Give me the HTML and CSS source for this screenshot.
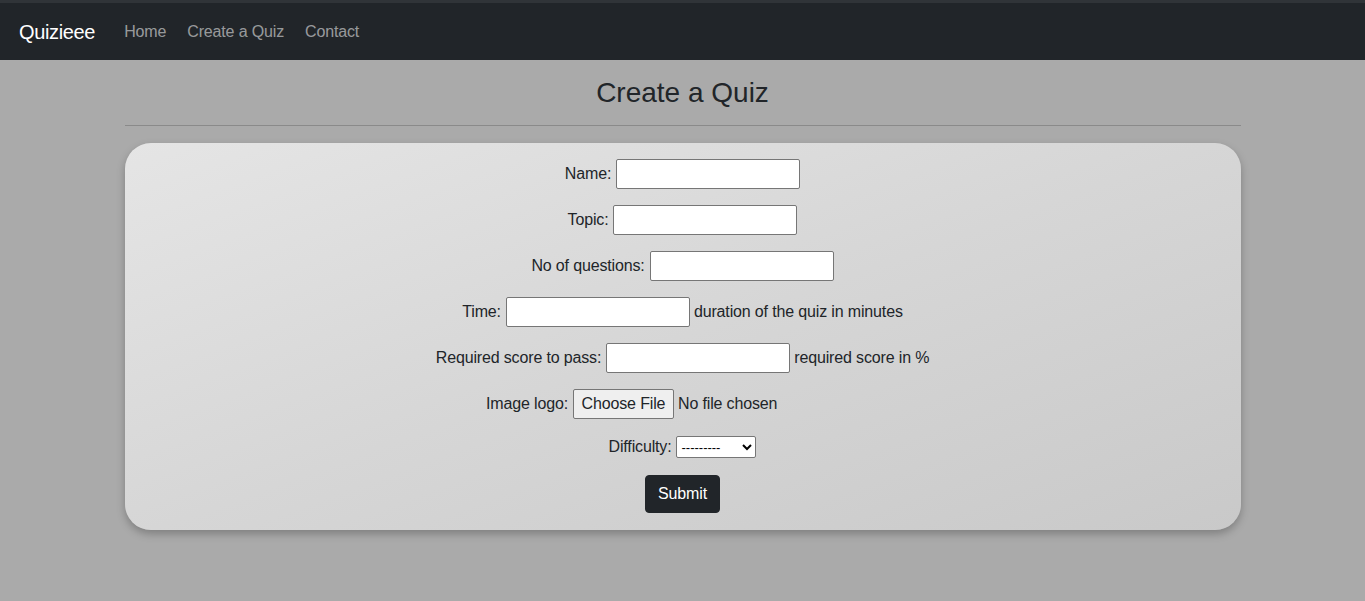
FILE: index.html
```html
<!DOCTYPE html>
<html lang="en">
<head>
<meta charset="utf-8">
<title>Create a Quiz</title>
<link rel="stylesheet" href="styles.css">
</head>
<body>
<nav class="navbar">
  <a class="brand" href="#">Quizieee</a>
  <ul class="nav-links">
    <li><a href="#">Home</a></li>
    <li><a href="#">Create a Quiz</a></li>
    <li><a href="#">Contact</a></li>
  </ul>
</nav>
<main class="container">
  <h3 class="title">Create a Quiz</h3>
  <hr class="divider">
  <form class="quiz-card">
    <p class="row"><label>Name:</label> <input class="field" type="text"></p>
    <p class="row"><label>Topic:</label> <input class="field" type="text"></p>
    <p class="row"><label>No of questions:</label> <input class="field" type="text"></p>
    <p class="row"><label>Time:</label> <input class="field" type="text"> <span>duration of the quiz in minutes</span></p>
    <p class="row"><label>Required score to pass:</label> <input class="field" type="text"> <span>required score in %</span></p>
    <p class="row"><label>Image logo:</label> <span class="file-input"><span class="file-btn">Choose File</span><span>No file chosen</span></span></p>
    <p class="row"><label>Difficulty:</label> <select class="select"><option>---------</option></select></p>
    <p class="row"><button type="button" class="submit">Submit</button></p>
  </form>
</main>
</body>
</html>
```
FILE: styles.css
```css
* { box-sizing: border-box; }
html, body {
  margin: 0;
  padding: 0;
}
body {
  background: #aaaaaa;
  font-family: "Liberation Sans", Arial, sans-serif;
  font-size: 16px;
  color: #212529;
  height: 601px;
  overflow: hidden;
}
.navbar {
  display: flex;
  align-items: center;
  height: 60px;
  background: #212529;
  border-top: 3px solid #303438;
  padding: 1px 19px 0;
}
.brand {
  color: #fff;
  text-decoration: none;
  font-size: 20px;
  letter-spacing: -0.35px;
  margin-right: 29px;
  line-height: 30px;
}
.nav-links {
  display: flex;
  list-style: none;
  margin: 0;
  padding: 0;
  gap: 21px;
}
.nav-links a {
  color: rgba(255,255,255,0.55);
  text-decoration: none;
  font-size: 16px;
  letter-spacing: -0.15px;
  line-height: 24px;
}
.container {
  width: 1116px;
  margin: 0 auto;
  padding-top: 15px;
}
.title {
  margin: 0;
  text-align: center;
  font-weight: 400;
  font-size: 28px;
  line-height: 36px;
  color: #212529;
}
.divider {
  margin: 14px 0 17px;
  border: 0;
  border-top: 1px solid #8a8a8a;
  height: 0;
}
.quiz-card {
  display: flex;
  flex-direction: column;
  align-items: center;
  gap: 16px;
  padding: 16px 0 17px;
  border-radius: 26px;
  background: linear-gradient(160deg, #e5e5e5 0%, #d6d6d6 50%, #c9c9c9 100%);
  box-shadow: 0 4px 8px rgba(0,0,0,0.25);
}
.row {
  margin: 0;
  display: flex;
  align-items: center;
  gap: 4px;
  font-size: 16px;
  line-height: 24px;
  letter-spacing: -0.15px;
}
.field {
  width: 184px;
  height: 30px;
  border: 1px solid #767676;
  border-radius: 2px;
  background: #fff;
  font: inherit;
  margin: 0 0 0 1px;
}
.file-input {
  display: flex;
  align-items: center;
  gap: 4px;
  width: 306px;
  margin-left: 1px;
}
.file-btn {
  display: inline-block;
  height: 30px;
  width: 101px;
  line-height: 28px;
  text-align: center;
  background: #efefef;
  border: 1px solid #767676;
  border-radius: 2px;
}
.select {
  width: 80px;
  height: 22px;
  font-family: "Liberation Sans", Arial, sans-serif;
  font-size: 13px;
  border: 1px solid #767676;
  border-radius: 2px;
  background: #fff;
  margin: 0 0 0 1px;
  color: #000;
}
.submit {
  height: 38px;
  padding: 6px 12px;
  font: inherit;
  letter-spacing: -0.15px;
  color: #fff;
  background: #212529;
  border: 1px solid #212529;
  border-radius: 4px;
}
```
